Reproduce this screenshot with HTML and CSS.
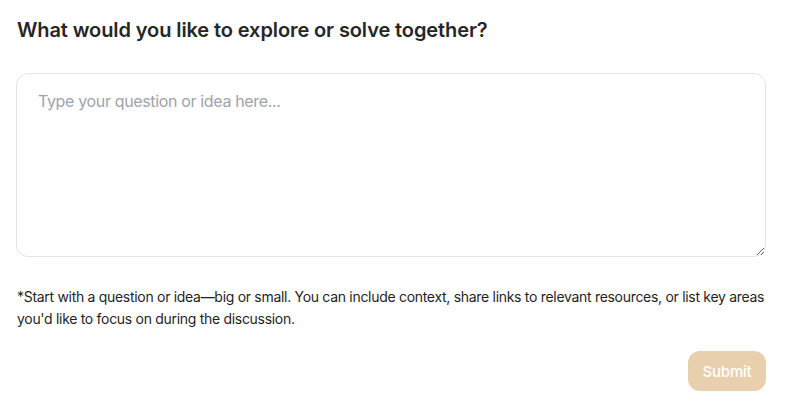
FILE: index.html
```html
<!DOCTYPE html>
<html lang="en">

<head>
  <meta charset="UTF-8" />
  <meta name="viewport" content="width=device-width, initial-scale=1.0" />
  <title>Explore together</title>
  <link rel="stylesheet" href="styles.css">
</head>

<body>
  <form class="ask">
    <h2 class="ask-title">What would you like to explore or solve together?</h2>
    <textarea class="ask-input" placeholder="Type your question or idea here..."></textarea>
    <p class="ask-hint">*Start with a question or idea—big or small. You can include context, share links to relevant resources, or list key areas you'd like to focus on during the discussion.</p>
    <div class="ask-actions">
      <button type="button" class="ask-submit" disabled>Submit</button>
    </div>
  </form>
</body>

</html>
```

FILE: styles.css
```css
body {
  margin: 0;
  background: #fff;
  font-family: Inter, "Noto Sans", sans-serif;
  color: #1f1f1f;
}

.ask {
  padding: 17px 20px 0 16px;
  display: flex;
  flex-direction: column;
}

.ask-title {
  margin: 0 0 0 1px;
  font-size: 20px;
  line-height: 26px;
  font-weight: 600;
  letter-spacing: -0.1px;
  color: #262626;
}

.ask-input {
  margin-top: 30px;
  height: 184px;
  box-sizing: border-box;
  padding: 15px 21px;
  border: 1px solid #e4e4e4;
  border-radius: 12px;
  font-family: inherit;
  font-size: 16px;
  line-height: 24px;
  letter-spacing: -0.35px;
  color: #1f1f1f;
  resize: vertical;
  outline: none;
}

.ask-input::placeholder {
  color: #9fa3ab;
}

.ask-hint {
  margin: 29px 0 0 1px;
  font-size: 14px;
  line-height: 22px;
  letter-spacing: -0.3px;
  color: #1f1f1f;
}

.ask-actions {
  display: flex;
  justify-content: flex-end;
  margin-top: 21px;
}

.ask-submit {
  width: 78px;
  height: 40px;
  border: none;
  border-radius: 12px;
  background: #e8cfad;
  color: #fff;
  font-family: inherit;
  font-size: 15px;
  font-weight: 500;
  letter-spacing: -0.2px;
}
```
